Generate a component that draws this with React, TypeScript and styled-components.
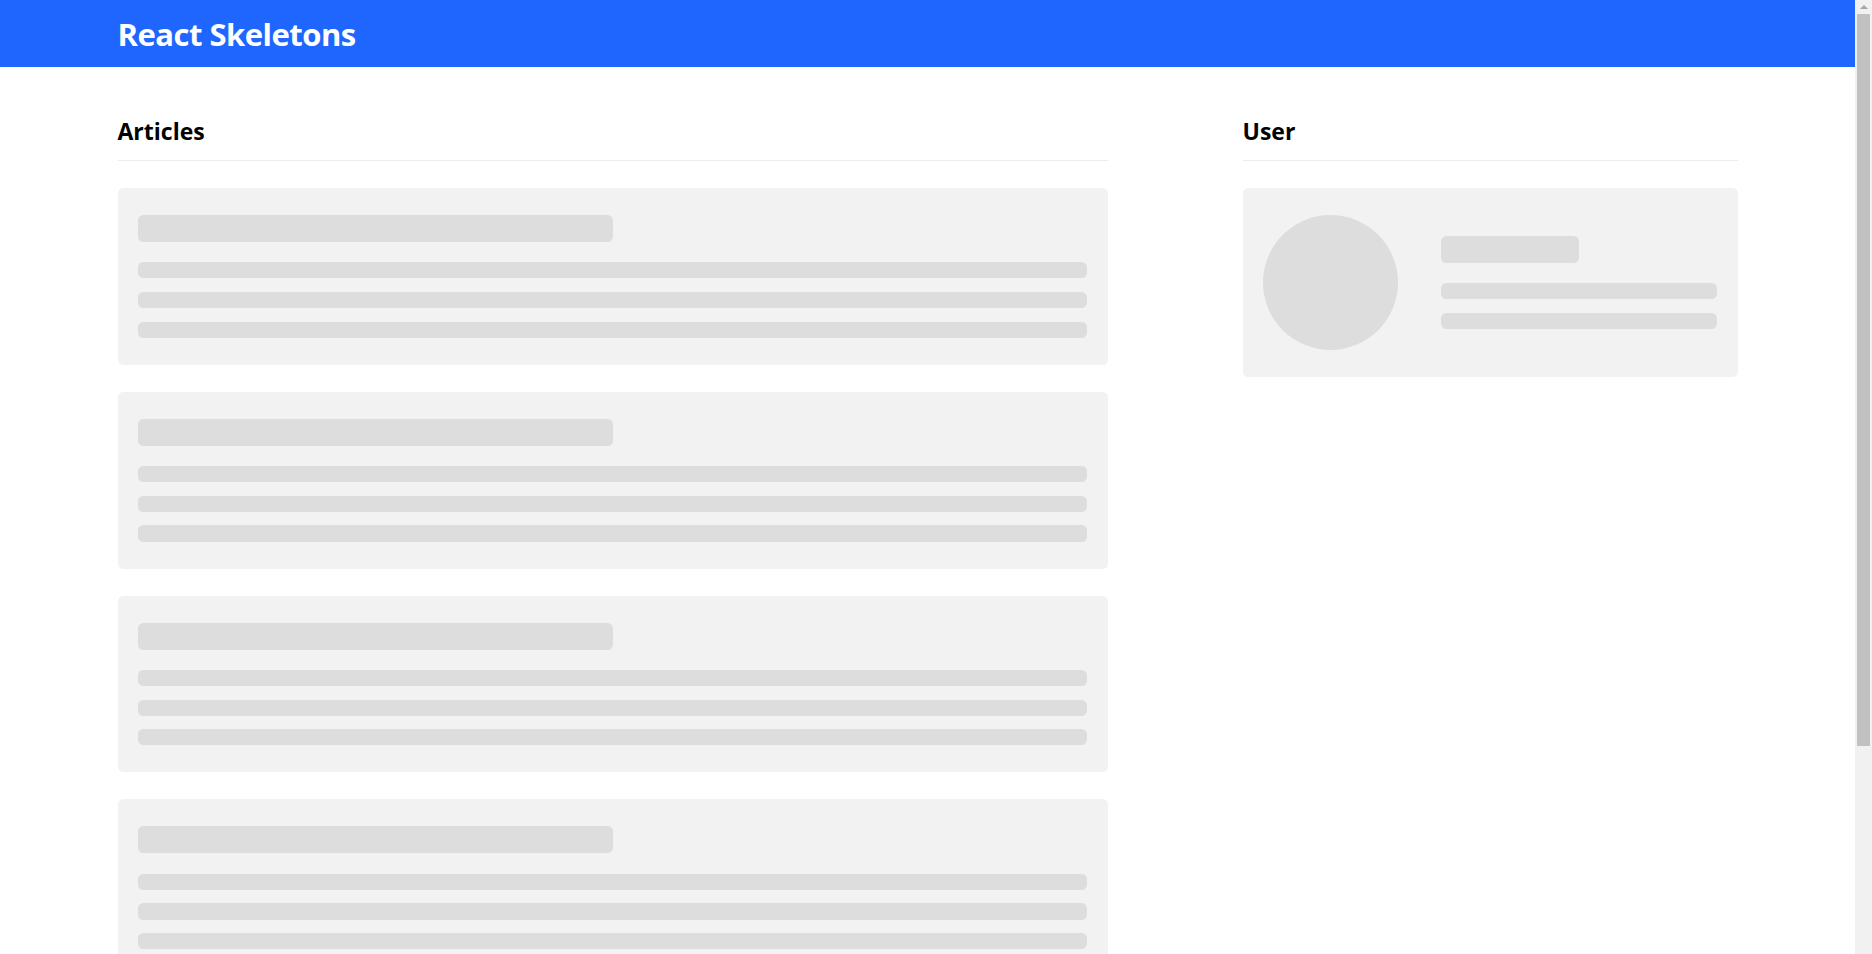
import React from 'react';
import styled, { createGlobalStyle } from 'styled-components';

const ARTICLE_COUNT = 5;

const GlobalStyle = createGlobalStyle`
  body {
    margin: 0;
    padding-right: 17px;
    background: #fff;
    color: #000;
    font-family: "Open Sans", "Noto Sans", "Liberation Sans", sans-serif;
  }
`;

const App = () => (
  <>
    <GlobalStyle />
    <SHeader>
      <SHeaderInner>
        <STitle>React Skeletons</STitle>
      </SHeaderInner>
    </SHeader>
    <SContent>
      <section>
        <SSectionTitle>Articles</SSectionTitle>
        {Array.from({ length: ARTICLE_COUNT }, (_, i) => (
          <SkeletonArticle key={i} />
        ))}
      </section>
      <section>
        <SSectionTitle>User</SSectionTitle>
        <SkeletonProfile />
      </section>
    </SContent>
    <SScrollbar aria-hidden>
      <SScrollArrow />
      <SScrollThumb />
    </SScrollbar>
  </>
);

const SkeletonArticle = () => (
  <SWrapper>
    <SSkeleton variant="title" />
    <SSkeleton variant="text" />
    <SSkeleton variant="text" />
    <SSkeleton variant="text" />
  </SWrapper>
);

const SkeletonProfile = () => (
  <SWrapper>
    <SProfile>
      <div>
        <SSkeleton variant="avatar" />
      </div>
      <div>
        <SSkeleton variant="title" />
        <SSkeleton variant="text" />
        <SSkeleton variant="text" />
      </div>
    </SProfile>
  </SWrapper>
);

type SkeletonVariant = 'title' | 'text' | 'avatar';

const SHeader = styled.header`
  height: 67px;
  display: flex;
  align-items: center;
  background: #1f66ff;
`;

const SHeaderInner = styled.div`
  width: 100%;
  max-width: 1620px;
  margin: 0 auto;
`;

const STitle = styled.h1`
  margin: 0;
  color: #fff;
  font-size: 31px;
  font-weight: 700;
  line-height: 40px;
  letter-spacing: -0.5px;
`;

const SContent = styled.main`
  max-width: 1620px;
  margin: 48px auto 0;
  display: grid;
  grid-template-columns: 2fr 1fr;
  gap: 135px;
`;

const SSectionTitle = styled.h2`
  margin: 0;
  padding-bottom: 13px;
  border-bottom: 1px solid #ececec;
  font-size: 23px;
  font-weight: 700;
  line-height: 32px;
`;

const SWrapper = styled.div`
  margin: 27px 0;
  padding: 13.5px 20.25px;
  background: #f2f2f2;
  border-radius: 5.4px;
`;

const SProfile = styled.div`
  display: grid;
  grid-template-columns: 1fr 2fr;
  gap: 40.5px;
  align-items: center;
`;

const SSkeleton = styled.div<{ variant: SkeletonVariant }>`
  margin: 13.5px 0;
  background: #ddd;
  border-radius: ${({ variant }) => (variant === 'avatar' ? '50%' : '5.4px')};
  width: ${({ variant }) =>
    variant === 'title' ? '50%' : variant === 'avatar' ? '135px' : '100%'};
  height: ${({ variant }) =>
    variant === 'title' ? '27px' : variant === 'avatar' ? '135px' : '16.2px'};
  margin-bottom: ${({ variant }) => (variant === 'title' ? '20.25px' : '13.5px')};
`;

const SScrollbar = styled.div`
  position: fixed;
  top: 0;
  right: 0;
  bottom: 0;
  width: 17px;
  display: flex;
  flex-direction: column;
  align-items: center;
  background: #f1f1f1;
`;

const SScrollArrow = styled.div`
  width: 0;
  height: 0;
  margin-top: 5px;
  border-left: 4px solid transparent;
  border-right: 4px solid transparent;
  border-bottom: 4px solid #a3a3a3;
`;

const SScrollThumb = styled.div`
  width: 13px;
  height: 732px;
  margin-top: 5px;
  background: #c1c1c1;
`;

export default App;
